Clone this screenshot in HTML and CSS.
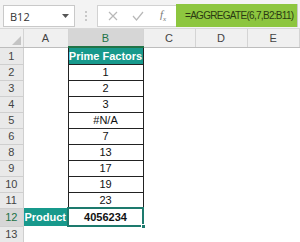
FILE: index.html
```html
<!DOCTYPE html>
<html>
<head>
<meta charset="utf-8">
<link rel="stylesheet" href="styles.css">
</head>
<body>
<div class="fbar">
  <div class="namebox"><span>B12</span><svg class="dd" width="7" height="4" viewBox="0 0 7 4"><path d="M0 0h7L3.5 4z" fill="#555"/></svg></div>
  <div class="dots"><i></i><i></i><i></i></div>
  <div class="btns">
    <svg width="10" height="10" viewBox="0 0 10 10"><path d="M1 1l8 8M9 1l-8 8" stroke="#b8b8b8" stroke-width="1.2"/></svg>
    <svg width="12" height="10" viewBox="0 0 12 10"><path d="M1 5l3.5 4L11 1" stroke="#b8b8b8" stroke-width="1.2" fill="none"/></svg>
    <span class="fx">f<sub>x</sub></span>
  </div>
  <div class="formula">=AGGREGATE(6,7,B2:B11)</div>
</div>
<table class="sheet">
  <colgroup><col class="c0"><col class="ca"><col class="cb"><col class="cc"><col class="cd"><col></colgroup>
  <tr class="hdr"><th class="corner"><svg width="9" height="9" viewBox="0 0 9 9"><path d="M9 0v9H0z" fill="#c4c4c4"/></svg></th><th>A</th><th class="sel">B</th><th>C</th><th>D</th><th>E</th></tr>
  <tr class="r1"><th>1</th><td></td><td class="v head">Prime Factors</td><td></td><td></td><td></td></tr>
  <tr><th>2</th><td></td><td class="v">1</td><td></td><td></td><td></td></tr>
  <tr><th>3</th><td></td><td class="v">2</td><td></td><td></td><td></td></tr>
  <tr><th>4</th><td></td><td class="v">3</td><td></td><td></td><td></td></tr>
  <tr><th>5</th><td></td><td class="v">#N/A</td><td></td><td></td><td></td></tr>
  <tr><th>6</th><td></td><td class="v">7</td><td></td><td></td><td></td></tr>
  <tr><th>8</th><td></td><td class="v">13</td><td></td><td></td><td></td></tr>
  <tr><th>9</th><td></td><td class="v">17</td><td></td><td></td><td></td></tr>
  <tr><th>10</th><td></td><td class="v">19</td><td></td><td></td><td></td></tr>
  <tr><th>11</th><td></td><td class="v">23</td><td></td><td></td><td></td></tr>
  <tr class="r12"><th class="sel">12</th><td class="label">Product</td><td class="v total"><b>4056234</b><i class="handle"></i></td><td></td><td></td><td></td></tr>
  <tr><th>13</th><td></td><td></td><td></td><td></td><td></td></tr>
</table>
</body>
</html>
```
FILE: styles.css
```css
* { box-sizing: border-box; }
html, body { margin: 0; padding: 0; background: #fff; }
body { width: 300px; height: 242px; overflow: hidden; font-family: "Open Sans", "Liberation Sans", sans-serif; }

.fbar {
  height: 29px;
  background: #f3f3f3;
  display: flex;
  align-items: flex-start;
  padding-top: 5px;
  border-bottom: 1px solid #d8d8d8;
}
.namebox {
  margin-left: 3px;
  width: 72px;
  height: 22px;
  background: #fff;
  border: 1px solid #c9c9c9;
  display: flex;
  align-items: center;
  justify-content: space-between;
  padding: 0 5px 0 6px;
  font-size: 11px;
  color: #333;
}
.dots { width: 22px; display: flex; flex-direction: column; align-items: center; gap: 2px; padding-top: 6px; }
.dots i { width: 2px; height: 2px; background: #c8c8c8; display: block; }
.btns {
  width: 79px;
  height: 22px;
  background: #fff;
  border: 1px solid #d2d2d2;
  border-right: none;
  display: flex;
  align-items: center;
  padding-left: 10px;
  gap: 14px;
}
.fx { font-family: "Liberation Serif", serif; font-style: italic; font-size: 11px; color: #777; margin-left: 2px; }
.fx sub { font-size: 7px; }
.formula {
  margin-top: -1px;
  width: 122px;
  height: 23px;
  background: #8dc63f;
  color: #2b3a12;
  font-family: "Liberation Sans", Arial, sans-serif;
  font-size: 10px;
  line-height: 23px;
  padding-left: 9px;
  letter-spacing: -0.7px;
  white-space: nowrap;
  overflow: hidden;
  border-right: 1px solid #c9c9c9;
}

.sheet { border-collapse: collapse; table-layout: fixed; width: 300px; font-family: "Liberation Sans", Arial, sans-serif; font-size: 11px; }
.c0 { width: 23px; } .ca { width: 45px; } .cb { width: 75px; } .cc { width: 52px; } .cd { width: 52px; }
.sheet th {
  background: #e9e9e9;
  color: #444;
  font-weight: normal;
  font-size: 11px;
  border-right: 1px solid #cfcfcf;
  border-bottom: 1px solid #cfcfcf;
  padding: 0;
  text-align: center;
}
.hdr th { height: 18px; background: #f0f0f0; border-right: 1px solid #d4d4d4; border-bottom: 1px solid #bdbdbd; }
.hdr th.corner { text-align: right; vertical-align: bottom; padding: 0 2px 2px 0; line-height: 0; }
.hdr th.sel { background: #d6d6d6; color: #217346; border-bottom: 2px solid #217346; }
.sheet th.sel { background: #d6d6d6; color: #217346; }
.sheet tr { height: 16px; }
.sheet tr.r1 { height: 17px; }
.sheet tr.r12 { height: 18px; }
.sheet td { padding: 0; text-align: center; color: #111; }
.sheet td.v { border: 1px solid #222; }
.sheet td.head { background: #17998c; color: #fff; font-weight: bold; }
.sheet td.label { background: #17998c; color: #fff; font-weight: bold; }
.sheet td.total { border: 2px solid #1d7a6d; position: relative; }
.sheet td.total b { font-weight: bold; color: #111; }
.handle { position: absolute; right: -4px; bottom: -4px; width: 5px; height: 5px; background: #1d7a6d; border: 1px solid #fff; display: block; }
```
